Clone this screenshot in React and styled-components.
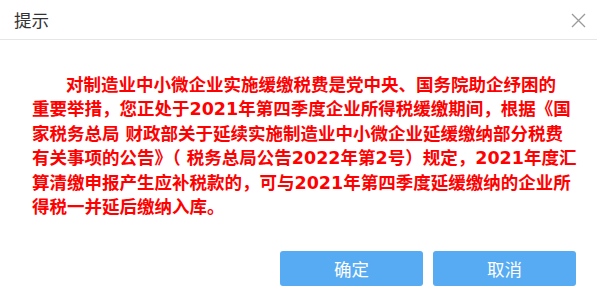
import styled, { createGlobalStyle } from "styled-components";

const GlobalStyle = createGlobalStyle`
  html, body {
    margin: 0;
    padding: 0;
    background: #fff;
  }
  body {
    font-family: "Noto Sans CJK SC", "Noto Sans", sans-serif;
  }
`;

const Dialog = styled.div`
  width: 597px;
  height: 305px;
  display: flex;
  flex-direction: column;
  background: #fff;
`;

const Header = styled.div`
  height: 40px;
  box-sizing: border-box;
  display: flex;
  align-items: center;
  justify-content: space-between;
  padding: 0 7px 0 14px;
  border-bottom: 1px solid #e6e6e6;
`;

const Title = styled.div`
  font-size: 17.5px;
  color: #333;
  line-height: 1;
  padding-top: 1px;
`;

const Close = styled.button`
  width: 24px;
  height: 24px;
  border: none;
  background: transparent;
  padding: 0;
  display: flex;
  align-items: center;
  justify-content: center;
  cursor: pointer;
  margin-top: 1px;
`;

const Body = styled.div`
  flex: 1;
  padding: 33px 0 0 32px;
`;

// digits in the reference are wide, DejaVu's bold digits match them
const Message = styled.p`
  margin: 0;
  color: #ff0000;
  font-family: "DejaVu Sans", "Noto Sans CJK SC", sans-serif;
  font-weight: 700;
  font-size: 17.5px;
  line-height: 24.4px;
  white-space: nowrap;
`;

const Line = styled.span`
  display: block;
  padding-left: ${(p) => (p.$indent ? "34px" : "0")};
`;

const Footer = styled.div`
  display: flex;
  justify-content: flex-end;
  gap: 10px;
  padding: 0 21px 19px 0;
`;

const Button = styled.button`
  width: 143px;
  height: 35px;
  border: none;
  border-radius: 3px;
  background: #56abf2;
  color: #fff;
  font-family: "Noto Sans CJK SC", sans-serif;
  font-size: 17.5px;
  line-height: 1;
  cursor: pointer;
`;

const lines = [
  "对制造业中小微企业实施缓缴税费是党中央、国务院助企纾困的",
  "重要举措，您正处于2021年第四季度企业所得税缓缴期间，根据《国",
  "家税务总局 财政部关于延续实施制造业中小微企业延缓缴纳部分税费",
  "有关事项的公告》（ 税务总局公告2022年第2号）规定，2021年度汇",
  "算清缴申报产生应补税款的，可与2021年第四季度延缓缴纳的企业所",
  "得税一并延后缴纳入库。",
];

export default function App() {
  return (
    <>
      <GlobalStyle />
      <Dialog>
        <Header>
          <Title>提示</Title>
          <Close aria-label="关闭">
            <svg width="15" height="15" viewBox="0 0 15 15">
              <path
                d="M1 1 L14 14 M14 1 L1 14"
                stroke="#9a9a9a"
                strokeWidth="1.3"
                fill="none"
              />
            </svg>
          </Close>
        </Header>
        <Body>
          <Message>
            {lines.map((text, i) => (
              <Line key={i} $indent={i === 0}>
                {text}
              </Line>
            ))}
          </Message>
        </Body>
        <Footer>
          <Button>确定</Button>
          <Button>取消</Button>
        </Footer>
      </Dialog>
    </>
  );
}
